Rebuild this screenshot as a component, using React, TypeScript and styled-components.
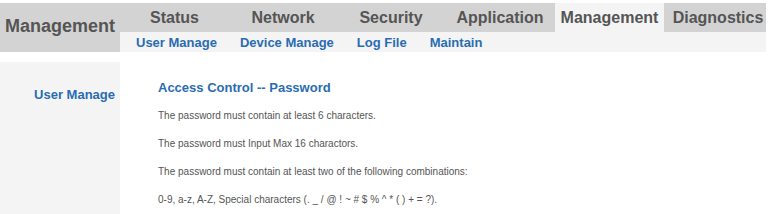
import React from "react";
import styled, { createGlobalStyle } from "styled-components";

const Global = createGlobalStyle`
  html, body { margin: 0; padding: 0; background: #fff; }
  body { font-family: "Liberation Sans", Arial, sans-serif; }
`;

const Page = styled.div`
  width: 766px;
  padding-top: 3px;
`;

const Header = styled.div`
  display: flex;
  height: 49px;
`;

const Brand = styled.div`
  width: 120px;
  background: #d3d3d3;
  color: #555;
  font-size: 18px;
  font-weight: bold;
  display: flex;
  align-items: center;
  justify-content: center;
  padding-bottom: 2px;
  box-sizing: border-box;
`;

const NavArea = styled.div`
  flex: 1;
  display: flex;
  flex-direction: column;
`;

const Tabs = styled.div`
  display: flex;
  height: 29px;
  background: #d3d3d3;
`;

const Tab = styled.div<{ $active?: boolean; $w: number; $shift?: number }>`
  width: ${(p) => p.$w}px;
  box-sizing: border-box;
  padding-left: ${(p) => p.$shift ?? 0}px;
  display: flex;
  align-items: center;
  justify-content: center;
  font-size: 16px;
  font-weight: bold;
  color: #555;
  background: ${(p) => (p.$active ? "#f4f4f4" : "#d3d3d3")};
`;

const SubNav = styled.div`
  flex: 1;
  background: #f4f4f4;
  display: flex;
  align-items: center;
  padding-left: 16px;
  gap: 23px;
`;

const SubLink = styled.span`
  color: #2a6cb3;
  font-size: 13px;
  font-weight: bold;
`;

const Body = styled.div`
  display: flex;
  margin-top: 10px;
  height: 160px;
`;

const Sidebar = styled.div`
  width: 120px;
  background: #f4f4f4;
  display: flex;
  justify-content: flex-end;
  padding-top: 25px;
  padding-right: 5px;
  box-sizing: border-box;
`;

const SideLink = styled.span`
  color: #2a6cb3;
  font-size: 13px;
  font-weight: bold;
`;

const Content = styled.div`
  padding-left: 38px;
  padding-top: 17px;
`;

const Title = styled.h2`
  margin: 0 0 6px 0;
  color: #2a6cb3;
  font-size: 13px;
  font-weight: bold;
  line-height: 17px;
`;

const Para = styled.p`
  margin: 0;
  color: #555;
  font-size: 10px;
  line-height: 28px;
`;

const tabs = [
  { label: "Status", w: 109 },
  { label: "Network", w: 108 },
  { label: "Security", w: 108 },
  { label: "Application", w: 110 },
  { label: "Management", w: 109, active: true },
  { label: "Diagnostics", w: 102, shift: 6 },
];

export default function App() {
  return (
    <>
      <Global />
      <Page>
        <Header>
          <Brand>Management</Brand>
          <NavArea>
            <Tabs>
              {tabs.map((t) => (
                <Tab key={t.label} $w={t.w} $active={t.active} $shift={t.shift}>
                  {t.label}
                </Tab>
              ))}
            </Tabs>
            <SubNav>
              <SubLink>User Manage</SubLink>
              <SubLink>Device Manage</SubLink>
              <SubLink>Log File</SubLink>
              <SubLink>Maintain</SubLink>
            </SubNav>
          </NavArea>
        </Header>
        <Body>
          <Sidebar>
            <SideLink>User Manage</SideLink>
          </Sidebar>
          <Content>
            <Title>Access Control -- Password</Title>
            <Para>The password must contain at least 6 characters.</Para>
            <Para>The password must Input Max 16 charactors.</Para>
            <Para>The password must contain at least two of the following combinations:</Para>
            <Para>0-9, a-z, A-Z, Special characters (. _ / @ ! ~ # $ % ^ * ( ) + = ?).</Para>
          </Content>
        </Body>
      </Page>
    </>
  );
}
